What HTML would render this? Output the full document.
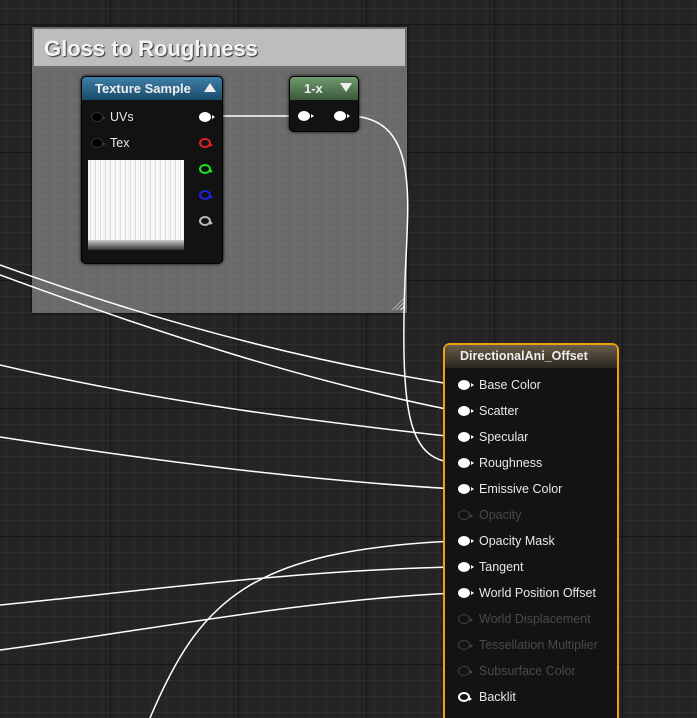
<!DOCTYPE html><html><head><style>
html,body{margin:0;width:697px;height:718px;overflow:hidden}
body{background:#242424;font-family:"Liberation Sans",sans-serif;position:relative}
.grid{position:absolute;inset:0;background-image:linear-gradient(90deg,#151515 1px,transparent 1px),linear-gradient(#151515 1px,transparent 1px),linear-gradient(90deg,#2d2d2d 1px,transparent 1px),linear-gradient(#2d2d2d 1px,transparent 1px);background-size:128px 128px,128px 128px,16px 16px,16px 16px;background-position:110px 0,0 24px,6px 0,0 8px}
.cm{position:absolute;left:32px;top:27px;width:375px;height:286px;background-color:#6a6a6a;background-image:linear-gradient(90deg,#717171 1px,transparent 1px),linear-gradient(#717171 1px,transparent 1px);background-size:16px 16px;background-position:6px 0,0 8px;box-shadow:0 0 3px #000}
.ct{position:absolute;left:2px;top:2px;right:2px;height:37px;background:#bdbdbd;color:#f4f4f4;font-weight:bold;font-size:22px;line-height:40px;padding-left:10px;text-shadow:1px 1px 1px #333}
.node{position:absolute;background:#121212;border-radius:5px;box-shadow:0 0 3px #000;border:1px solid #000}
.hd{height:23px;border-radius:4px 4px 0 0;color:#eee;font-weight:bold;font-size:13px;line-height:23px}
.t{position:absolute;color:#e8e8e8;font-size:12.5px}
.pin{position:absolute;width:12px;height:10px;border-radius:50%;box-sizing:border-box}
.pin::after{content:"";position:absolute;right:-4px;top:2.5px;border-top:2.5px solid transparent;border-bottom:2.5px solid transparent;border-left:3px solid #fff}
.d::after{border-left-color:#444}
.r::after{border-left-color:#e02020}.g::after{border-left-color:#20e020}.b::after{border-left-color:#2020e0}.gy::after{border-left-color:#bbb}
.k::after{border-left-color:#333}
</style></head><body>
<div class="grid"></div>
<div class="cm"><div class="ct">Gloss to Roughness</div>
<div style="position:absolute;right:3px;bottom:3px;width:12px;height:12px;background:repeating-linear-gradient(135deg,transparent 0 2px,#ddd 2px 3px);clip-path:polygon(100% 0,100% 100%,0 100%)"></div></div>
<svg width="697" height="718" style="position:absolute;left:0;top:0" fill="none" stroke="#fff" stroke-width="1.5">
<path d="M0 265 C150 320 300 360 456 385"/>
<path d="M0 275 C150 330 300 380 456 411"/>
<path d="M0 365 C150 400 300 420 456 437"/>
<path d="M0 437 C150 460 300 480 456 489"/>
<path d="M0 605 C150 590 300 570 456 567"/>
<path d="M0 650 C150 630 300 600 456 593"/>
<path d="M150 718 C200 600 250 550 456 541"/>
<path d="M215 116 L300 116"/>
<path d="M352 116 C420 120 408 200 405 280 C400 420 410 460 456 463"/>
</svg>
<div class="node" style="left:81px;top:76px;width:140px;height:186px">
<div class="hd" style="background:linear-gradient(#3f7fa8,#1a4b69);padding-left:13px">Texture Sample<span style="position:absolute;right:6px;top:6px;width:0;height:0;border-left:6px solid transparent;border-right:6px solid transparent;border-bottom:9px solid #eee"></span></div>
<div class="pin k" style="left:9px;top:35px;background:#000;border:1.5px solid #333"></div><div class="t" style="left:28px;top:33px">UVs</div>
<div class="pin k" style="left:9px;top:61px;background:#000;border:1.5px solid #333"></div><div class="t" style="left:28px;top:59px">Tex</div>
<div class="pin" style="left:117px;top:35px;background:#fff"></div>
<div class="pin r" style="left:117px;top:61px;border:2px solid #e02020"></div>
<div class="pin g" style="left:117px;top:87px;border:2px solid #20e020"></div>
<div class="pin b" style="left:117px;top:113px;border:2px solid #2020e0"></div>
<div class="pin gy" style="left:117px;top:139px;border:2px solid #bbb"></div>
<div style="position:absolute;left:6px;top:83px;width:96px;height:90px;background:repeating-linear-gradient(90deg,#f4f4f4 0 2px,#ddd 2px 3px,#fafafa 3px 5px),linear-gradient(#f4f4f4,#e8e8e8);"></div>
<div style="position:absolute;left:6px;top:163px;width:96px;height:10px;background:linear-gradient(#ccc,#333)"></div>
</div>
<div class="node" style="left:289px;top:76px;width:68px;height:54px">
<div class="hd" style="background:linear-gradient(#6f9a6f,#3c5a3c);padding-left:14px">1-x<span style="position:absolute;right:6px;top:6px;width:0;height:0;border-left:6px solid transparent;border-right:6px solid transparent;border-top:9px solid #eee"></span></div>
<div class="pin" style="left:8px;top:34px;background:#fff"></div>
<div class="pin" style="left:44px;top:34px;background:#fff"></div>
</div>
<div style="position:absolute;left:443px;top:343px;width:172px;height:380px;border:2px solid #f0a010;border-radius:7px;background:#131313">
<div class="hd" style="background:linear-gradient(#6a5c48,#2a2620);padding-left:15px;font-size:12.5px">DirectionalAni_Offset</div>
</div>
<div class="pin" style="left:458px;top:380px;background:#fff"></div><div class="t" style="left:479px;top:378px">Base Color</div>
<div class="pin" style="left:458px;top:406px;background:#fff"></div><div class="t" style="left:479px;top:404px">Scatter</div>
<div class="pin" style="left:458px;top:432px;background:#fff"></div><div class="t" style="left:479px;top:430px">Specular</div>
<div class="pin" style="left:458px;top:458px;background:#fff"></div><div class="t" style="left:479px;top:456px">Roughness</div>
<div class="pin" style="left:458px;top:484px;background:#fff"></div><div class="t" style="left:479px;top:482px">Emissive Color</div>
<div class="pin d" style="left:458px;top:510px;border:1.5px solid #444"></div><div class="t" style="left:479px;top:508px;color:#4a4a4a">Opacity</div>
<div class="pin" style="left:458px;top:536px;background:#fff"></div><div class="t" style="left:479px;top:534px">Opacity Mask</div>
<div class="pin" style="left:458px;top:562px;background:#fff"></div><div class="t" style="left:479px;top:560px">Tangent</div>
<div class="pin" style="left:458px;top:588px;background:#fff"></div><div class="t" style="left:479px;top:586px">World Position Offset</div>
<div class="pin d" style="left:458px;top:614px;border:1.5px solid #444"></div><div class="t" style="left:479px;top:612px;color:#4a4a4a">World Displacement</div>
<div class="pin d" style="left:458px;top:640px;border:1.5px solid #444"></div><div class="t" style="left:479px;top:638px;color:#4a4a4a">Tessellation Multiplier</div>
<div class="pin d" style="left:458px;top:666px;border:1.5px solid #444"></div><div class="t" style="left:479px;top:664px;color:#4a4a4a">Subsurface Color</div>
<div class="pin" style="left:458px;top:692px;border:2px solid #fff"></div><div class="t" style="left:479px;top:690px">Backlit</div>
</body></html>
